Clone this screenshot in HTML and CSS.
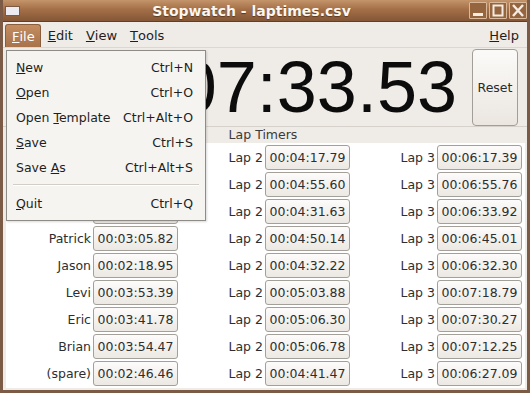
FILE: index.html
```html
<!DOCTYPE html>
<html lang="en">
<head>
    <meta charset="UTF-8">
    <title>Stopwatch - laptimes.csv</title>
    <link rel="stylesheet" href="styles.css">
</head>
<body>
    <div class="window">
        <div class="titlebar">
            <span class="app-icon"></span>
            <span class="title">Stopwatch - laptimes.csv</span>
            <div class="controls">
                <span class="ctl">
                    <svg width="16" height="15" viewBox="0 0 16 15"><rect x="3" y="10" width="10" height="3" fill="#f4ece2"/></svg>
                </span>
                <span class="ctl">
                    <svg width="16" height="15" viewBox="0 0 16 15"><rect x="3.5" y="2.5" width="9" height="10" fill="none" stroke="#f4ece2" stroke-width="2"/></svg>
                </span>
                <span class="ctl">
                    <svg width="16" height="15" viewBox="0 0 16 15"><path d="M3 2 L13 13 M13 2 L3 13" stroke="#f4ece2" stroke-width="2.4"/></svg>
                </span>
            </div>
        </div>

        <div class="menubar">
            <span class="menu-title active"><u>F</u>ile</span>
            <span class="menu-title"><u>E</u>dit</span>
            <span class="menu-title"><u>V</u>iew</span>
            <span class="menu-title"><u>T</u>ools</span>
            <span class="spacer"></span>
            <span class="menu-title"><u>H</u>elp</span>
        </div>

        <div class="clock-row">
            <div class="clock">00:07:33.53</div>
            <button class="reset">Reset</button>
        </div>

        <div class="frame-label">Lap Timers</div>

        <div class="laps">
            <div class="lap-grid" id="lap-grid"></div>
        </div>

        <!-- open File menu -->
        <div class="dropdown">
            <div class="item"><span><u>N</u>ew</span><span>Ctrl+N</span></div>
            <div class="item"><span><u>O</u>pen</span><span>Ctrl+O</span></div>
            <div class="item"><span>Open <u>T</u>emplate</span><span>Ctrl+Alt+O</span></div>
            <div class="item"><span><u>S</u>ave</span><span>Ctrl+S</span></div>
            <div class="item"><span>Save <u>A</u>s</span><span>Ctrl+Alt+S</span></div>
            <div class="separator"></div>
            <div class="item"><span><u>Q</u>uit</span><span>Ctrl+Q</span></div>
        </div>
    </div>

    <script>
        // Runner name, then one time per lap
        const laps = [
            ['Mike', '00:02:31.10', '00:04:17.79', '00:06:17.39'],
            ['Steve', '00:02:58.41', '00:04:55.60', '00:06:55.76'],
            ['Dave', '00:02:44.02', '00:04:31.63', '00:06:33.92'],
            ['Patrick', '00:03:05.82', '00:04:50.14', '00:06:45.01'],
            ['Jason', '00:02:18.95', '00:04:32.22', '00:06:32.30'],
            ['Levi', '00:03:53.39', '00:05:03.88', '00:07:18.79'],
            ['Eric', '00:03:41.78', '00:05:06.30', '00:07:30.27'],
            ['Brian', '00:03:54.47', '00:05:06.78', '00:07:12.25'],
            ['(spare)', '00:02:46.46', '00:04:41.47', '00:06:27.09']
        ];

        const grid = document.getElementById('lap-grid');
        laps.forEach(row => {
            const labels = [row[0], 'Lap 2', 'Lap 3'];
            for (let i = 0; i < 3; i++) {
                const label = document.createElement('div');
                label.className = 'lap-label';
                label.textContent = labels[i];
                const btn = document.createElement('button');
                btn.className = 'lap-btn';
                btn.textContent = row[i + 1];
                grid.appendChild(label);
                grid.appendChild(btn);
            }
        });
    </script>
</body>
</html>
```

FILE: styles.css
```css
body {
    margin: 0;
    font-family: "DejaVu Sans", sans-serif;
    font-size: 12.5px;
    color: #1e1e1e;
    background-color: #efebe7;
}
.window {
    position: relative;
    width: 530px;
    height: 393px;
    box-sizing: border-box;
    background-color: #efebe7;
    border-left: 3px solid #7b5b45;
    border-right: 3px solid #7b5b45;
    border-bottom: 3px solid #7b5b45;
    overflow: hidden;
}
.titlebar {
    height: 22px;
    margin: 0 -3px;
    display: flex;
    align-items: center;
    position: relative;
    background: linear-gradient(to bottom, #c4946a 0%, #a36f47 45%, #855737 100%);
    border-bottom: 1px solid #5e3f29;
    box-sizing: border-box;
}
.app-icon {
    width: 13px;
    height: 8px;
    margin-left: 5px;
    background-color: #ecebf2;
    border: 1px solid #7a5a44;
}
.title {
    flex: 1;
    text-align: center;
    font-weight: bold;
    font-size: 14px;
    color: #fbf6ef;
    text-shadow: 0 1px 1px #5a3a22;
    padding-left: 14px;
}
.controls {
    display: flex;
    gap: 2px;
    margin-right: 3px;
}
.ctl {
    width: 16px;
    height: 15px;
    display: flex;
    border: 1px solid #d9b99a;
    border-radius: 1px;
    background-color: #94653f;
}
.menubar {
    height: 26px;
    display: flex;
    align-items: stretch;
    padding: 2px 2px 0 2px;
    box-sizing: border-box;
    border-bottom: 1px solid #dcd7d1;
}
.menu-title {
    display: flex;
    align-items: center;
    padding: 0 6px 0 7px;
    font-size: 13px;
    color: #1e1e1e;
}
.menu-title.active {
    background: linear-gradient(to bottom, #c38d60, #a8724b);
    color: #ffffff;
    border: 1px solid #8a5d3c;
    border-bottom: none;
    border-radius: 3px 3px 0 0;
    padding: 0 5px 0 6px;
}
.spacer {
    flex: 1;
}
.clock-row {
    display: flex;
    height: 79px;
    border-bottom: 1px solid #d6d1cb;
    box-sizing: border-box;
}
.clock {
    flex: 1;
    text-align: right;
    font-family: "Liberation Sans", Arial, sans-serif;
    font-size: 72px;
    line-height: 72px;
    padding-top: 3px;
    padding-right: 15px;
    color: #0c0c0c;
    white-space: nowrap;
}
.reset {
    width: 46px;
    height: 77px;
    margin: 1px 9px 0 0;
    padding: 0;
    font-family: "DejaVu Sans", sans-serif;
    font-size: 12.5px;
    color: #2a2a2a;
    background: linear-gradient(to bottom, #fbfaf8, #ebe6e0);
    border: 1px solid #a29d97;
    border-radius: 4px;
}
.frame-label {
    height: 16px;
    line-height: 15px;
    text-align: center;
    color: #3a3a3a;
    padding-right: 4px;
}
.laps {
    margin: 0 2px 0 3px;
    height: 245px;
    background-color: #ffffff;
    padding: 2px 0 2px 2px;
    box-sizing: border-box;
}
.lap-grid {
    display: grid;
    grid-template-columns: 85px 85px 87px 85px 87px 85px;
    grid-auto-rows: 25px;
    row-gap: 2px;
}
.lap-label {
    text-align: right;
    padding-right: 2px;
    line-height: 25px;
    color: #2e2e2e;
    white-space: nowrap;
}
.lap-btn {
    padding: 0;
    font-family: "DejaVu Sans", sans-serif;
    font-size: 12.5px;
    color: #2e2e2e;
    background: linear-gradient(to bottom, #fdfcfb, #ece8e3);
    border: 1px solid #a39f99;
    border-radius: 3px;
}
.dropdown {
    position: absolute;
    left: 3px;
    top: 50px;
    width: 200px;
    box-sizing: border-box;
    padding: 4px 12px 4px 9px;
    background-color: #f6f4f1;
    border: 1px solid #8f8b86;
    box-shadow: 1px 1px 2px rgba(0,0,0,0.15);
}
.item {
    display: flex;
    justify-content: space-between;
    height: 25px;
    line-height: 25px;
    color: #1e1e1e;
}
.separator {
    height: 1px;
    background-color: #d2cdc7;
    margin: 4px -6px 5px -3px;
    border-bottom: 1px solid #ffffff;
}
```
